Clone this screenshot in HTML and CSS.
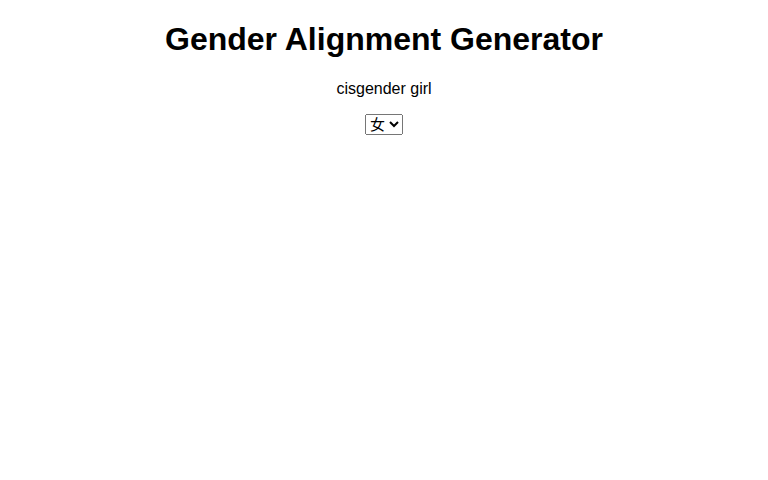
FILE: index.html
```html
<!DOCTYPE html>
<html lang="en">
<head>
  <meta charset="UTF-8">
  <meta name="viewport" content="width=device-width, initial-scale=1.0">
  <title>Gender Alignment Generator</title>
  <link rel="stylesheet" href="styles.css">
</head>
<body>
  <h1>Gender Alignment Generator</h1>
  <p id="alignment">cisgender girl</p>
  <select class="gender-select" aria-label="Gender" aria-describedby="alignment">
    <option selected>女</option>
    <option>男</option>
  </select>
</body>
</html>
```

FILE: styles.css
```css
body {
  margin: 0;
  font-family: "Liberation Sans", Arial, "Noto Sans CJK SC", sans-serif;
  text-align: center;
}

/* Gender picker */
.gender-select {
  font-family: inherit;
  font-size: 15px;
}
```
